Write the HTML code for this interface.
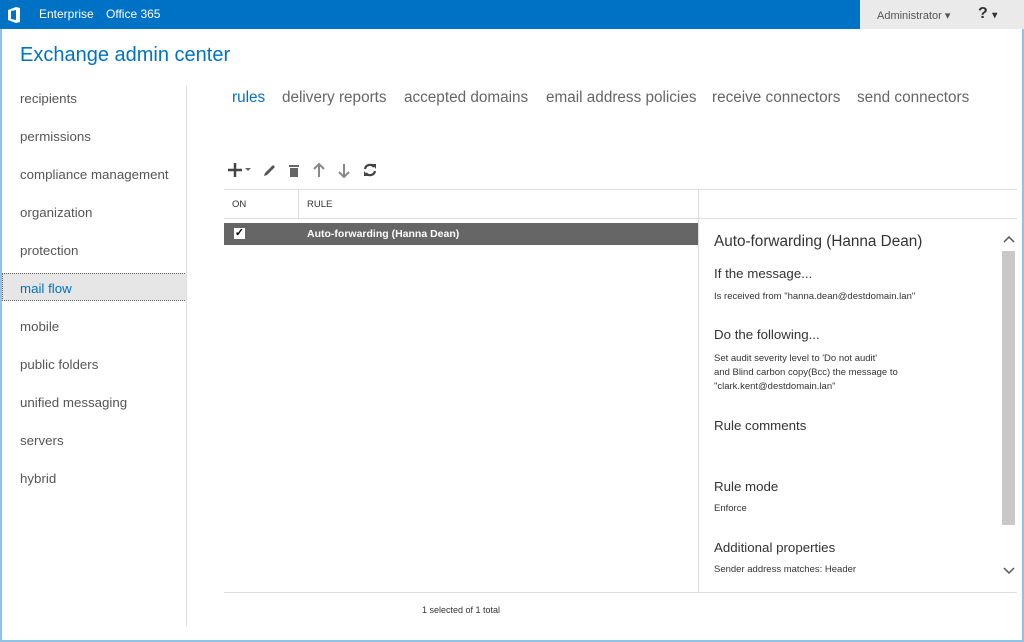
<!DOCTYPE html>
<html><head><style>
*{margin:0;padding:0;box-sizing:border-box}
body{width:1024px;height:642px;overflow:hidden;background:#fff;font-family:"Liberation Sans",sans-serif;position:relative}
.a{position:absolute;white-space:nowrap}
.top{position:absolute;left:0;top:0;width:1024px;height:29px;background:#0072c6}
.topr{position:absolute;left:860px;top:0;width:164px;height:29px;background:#eaeaea}
.nav{font-size:13.3px;color:#555}
.tab{font-size:15.3px;color:#666;top:89px}
.small{font-size:9.5px;color:#333}
.h{font-size:13.3px;color:#333}
</style></head><body>
<div class="a" style="left:0;top:0;width:1024px;height:642px;border:2px solid #8fc4e8;border-top:none"></div>
<div class="top"></div><div class="topr"></div>
<svg class="a" style="left:7px;top:7px" width="14" height="16" viewBox="0 0 14 16"><path d="M1 3 L9 0 L13 1 V15 L9 16 L1 13 Z M4 4 V12 L9 13 V3 Z" fill="#fff" fill-rule="evenodd"/></svg>
<div class="a" style="left:39px;top:7px;font-size:12px;color:#fff">Enterprise</div>
<div class="a" style="left:106px;top:7px;font-size:12px;color:#fff">Office 365</div>
<div class="a" style="left:62px;top:25px;width:0;height:0;border:4px solid transparent;border-bottom-color:#fff"></div>
<div class="a" style="left:877px;top:9px;font-size:11px;color:#555">Administrator &#9662;</div>
<div class="a" style="left:978px;top:5px;font-size:16px;font-weight:bold;color:#333">? <span style="font-size:10px">&#9662;</span></div>
<div class="a" style="left:20px;top:44px;font-size:20px;color:#0072c6">Exchange admin center</div>
<div class="a nav" style="left:20px;top:91px">recipients</div>
<div class="a nav" style="left:20px;top:129px">permissions</div>
<div class="a nav" style="left:20px;top:167px">compliance management</div>
<div class="a nav" style="left:20px;top:205px">organization</div>
<div class="a nav" style="left:20px;top:243px">protection</div>
<div class="a" style="left:2px;top:273px;width:185px;height:28px;background:#e6e6e6;border:1px dotted #666"></div>
<div class="a nav" style="left:20px;top:281px;color:#0072c6">mail flow</div>
<div class="a nav" style="left:20px;top:319px">mobile</div>
<div class="a nav" style="left:20px;top:357px">public folders</div>
<div class="a nav" style="left:20px;top:395px">unified messaging</div>
<div class="a nav" style="left:20px;top:433px">servers</div>
<div class="a nav" style="left:20px;top:471px">hybrid</div>
<div class="a" style="left:186px;top:86px;width:1px;height:540px;background:#ddd"></div>
<div class="a tab" style="left:232px;color:#0072c6">rules</div>
<div class="a tab" style="left:282px">delivery reports</div>
<div class="a tab" style="left:404px">accepted domains</div>
<div class="a tab" style="left:546px">email address policies</div>
<div class="a tab" style="left:712px">receive connectors</div>
<div class="a tab" style="left:857px">send connectors</div>
<svg class="a" style="left:227px;top:162px" width="30" height="16" viewBox="0 0 30 16"><path d="M1 8 H15 M8 1 V15" stroke="#444" stroke-width="2.5"/><path d="M18 6 L24 6 L21 9 Z" fill="#666"/></svg>
<svg class="a" style="left:262px;top:162px" width="90" height="16" viewBox="0 0 90 16"><path d="M2 14 L3 11 L11 3 L13 5 L5 13 Z" fill="#555"/><rect x="27" y="3" width="10" height="2" fill="#666"/><rect x="28" y="6" width="8" height="9" fill="#666"/><path d="M57 2 V15 M52 7 L57 2 L62 7" stroke="#888" stroke-width="2" fill="none"/><path d="M82 2 V15 M77 10 L82 15 L87 10" stroke="#888" stroke-width="2" fill="none"/></svg>
<svg class="a" style="left:362px;top:162px" width="16" height="16" viewBox="0 0 16 16"><path d="M3 7 A5 5 0 0 1 12 5 M13 9 A5 5 0 0 1 4 11" stroke="#444" stroke-width="2.2" fill="none"/><path d="M10 2 L14 2 L14 7 Z M6 14 L2 14 L2 9 Z" fill="#444"/></svg>
<div class="a" style="left:224px;top:189px;width:793px;height:1px;background:#ddd"></div>
<div class="a" style="left:224px;top:218px;width:793px;height:1px;background:#ddd"></div>
<div class="a" style="left:298px;top:190px;width:1px;height:28px;background:#ddd"></div>
<div class="a" style="left:698px;top:190px;width:1px;height:402px;background:#ddd"></div>
<div class="a small" style="left:232px;top:199px">ON</div>
<div class="a small" style="left:307px;top:199px">RULE</div>
<div class="a" style="left:224px;top:223px;width:474px;height:22px;background:#666"></div>
<div class="a" style="left:234px;top:228px;width:11px;height:11px;background:#fff;font-size:11px;line-height:11px;color:#000;text-align:center;font-weight:bold">&#10003;</div>
<div class="a" style="left:307px;top:228px;font-size:10.5px;font-weight:bold;color:#fff">Auto-forwarding (Hanna Dean)</div>
<div class="a" style="left:714px;top:233px;font-size:15.3px;color:#333">Auto-forwarding (Hanna Dean)</div>
<div class="a h" style="left:714px;top:266px">If the message...</div>
<div class="a small" style="left:714px;top:291px">Is received from "hanna.dean@destdomain.lan"</div>
<div class="a h" style="left:714px;top:327px">Do the following...</div>
<div class="a small" style="left:714px;top:352px;line-height:14px">Set audit severity level to 'Do not audit'<br>and Blind carbon copy(Bcc) the message to<br>"clark.kent@destdomain.lan"</div>
<div class="a h" style="left:714px;top:418px">Rule comments</div>
<div class="a h" style="left:714px;top:479px">Rule mode</div>
<div class="a small" style="left:714px;top:503px">Enforce</div>
<div class="a h" style="left:714px;top:540px">Additional properties</div>
<div class="a small" style="left:714px;top:564px">Sender address matches: Header</div>
<svg class="a" style="left:1003px;top:235px" width="12" height="8"><path d="M1 7 L6 2 L11 7" stroke="#555" stroke-width="1.5" fill="none"/></svg>
<div class="a" style="left:1002px;top:251px;width:13px;height:274px;background:#c8c8c8"></div>
<svg class="a" style="left:1003px;top:567px" width="12" height="8"><path d="M1 1 L6 6 L11 1" stroke="#555" stroke-width="1.5" fill="none"/></svg>
<div class="a" style="left:224px;top:592px;width:793px;height:1px;background:#ddd"></div>
<div class="a small" style="left:422px;top:605px;font-size:9px">1 selected of 1 total</div>
</body></html>
